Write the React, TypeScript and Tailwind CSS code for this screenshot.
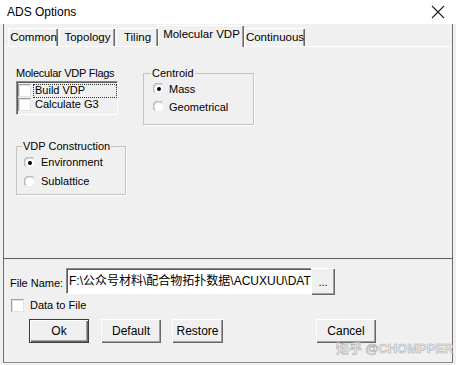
import React from "react";

const font = { fontFamily: '"Liberation Sans", "Noto Sans CJK SC", Arial, sans-serif' };

function Radio({ checked }: { checked?: boolean }) {
  return (
    <svg width="12" height="12" viewBox="0 0 12 12" className="shrink-0">
      <circle cx="6" cy="6" r="5.5" fill="#fff" />
      <path d="M1.6 9.4 A5 5 0 0 1 9.4 1.6" stroke="#9a9a9a" strokeWidth="1" fill="none" />
      <path d="M2.4 8.6 A3.9 3.9 0 0 1 8.6 2.4" stroke="#cfcfcf" strokeWidth="1" fill="none" />
      <path d="M9.4 1.6 A5 5 0 0 1 1.6 9.4" stroke="#e6e6e6" strokeWidth="1" fill="none" />
      {checked && <circle cx="6" cy="6" r="2" fill="#000" />}
    </svg>
  );
}

function Check() {
  return (
    <div className="h-[13px] w-[13px] shrink-0 border border-[#a0a0a0] border-b-[#e3e3e3] border-r-[#e3e3e3] bg-white shadow-[inset_1px_1px_0_#e0e0e0]" />
  );
}

function Btn({ label, w, def }: { label: string; w: string; def?: boolean }) {
  return (
    <div
      className={`flex h-[24px] items-center justify-center bg-[#f0f0f0] text-[12px] text-black ${w} ${
        def
          ? "border border-[#3c3c3c] shadow-[inset_1px_1px_0_#fff,inset_-1px_-1px_0_#696969,inset_-2px_-2px_0_#a0a0a0]"
          : "shadow-[inset_1px_1px_0_#fff,inset_-1px_-1px_0_#696969,inset_-2px_-2px_0_#a0a0a0]"
      }`}
    >
      {label}
    </div>
  );
}

function Tab({ label, w, active }: { label: string; w: string; active?: boolean }) {
  return (
    <div
      className={`flex items-center justify-center whitespace-nowrap bg-[#f0f0f0] text-[11.5px] ${w} ${
        active
          ? "relative z-10 -mb-[1px] h-[22px] border-l border-t border-white pb-[3px] shadow-[inset_-1px_0_0_#696969,inset_-2px_0_0_#a0a0a0]"
          : "h-[18px] border-l border-t border-white shadow-[inset_-1px_0_0_#696969,inset_-2px_0_0_#a0a0a0]"
      }`}
    >
      {label}
    </div>
  );
}

export default function App() {
  return (
    <div className="relative h-[365px] w-[456px] overflow-hidden bg-[#f0f0f0] text-black" style={font}>
      {/* title bar */}
      <div className="flex h-[24px] items-center justify-between bg-white pl-[7px] pr-[11px]">
        <span className="text-[12px]">ADS Options</span>
        <svg width="14" height="14" viewBox="0 0 14 14">
          <path d="M1 1 L13 13 M13 1 L1 13" stroke="#222" strokeWidth="1.1" />
        </svg>
      </div>

      <div className="mx-[3px] flex h-[339px] flex-col border-x border-b border-x-[#6e6e6e] border-b-[#8a8a8a]">
        {/* tabs */}
        <div className="flex h-[22px] items-end pl-[4px]">
          <Tab label="Common" w="w-[50px]" />
          <Tab label="Topology" w="w-[56px] ml-[1px]" />
          <Tab label="Tiling" w="w-[42px] ml-[1px]" />
          <Tab label="Molecular VDP" w="w-[86px]" active />
          <Tab label="Continuous" w="w-[61px]" />
        </div>

        {/* panel */}
        <div className="flex h-[213px] flex-col border-b border-t border-b-[#5a5a5a] border-t-white pl-[12px] pt-[19px] text-[11px]">
          <div className="flex items-start">
            <div className="w-[102px]">
              <div className="whitespace-nowrap leading-[14px] tracking-[-0.25px]">Molecular VDP Flags</div>
              <div className="mt-[1px] h-[34px] border border-[#8a8a8a] border-b-white border-r-white pl-[1px] pt-[2px] shadow-[inset_1px_1px_0_#5a5a5a]">
                <div className="flex h-[13px] items-center">
                  <Check />
                  <span className="ml-[2px] flex h-[14px] flex-1 items-center border border-dotted border-[#333] pl-[1px]">
                    Build VDP
                  </span>
                </div>
                <div className="flex h-[14px] items-center">
                  <Check />
                  <span className="ml-[4px]">Calculate G3</span>
                </div>
              </div>
            </div>

            <fieldset className="ml-[25px] h-[59px] w-[111px] border border-[#c4c4c4] pb-[6px] pl-[9px] shadow-[1px_1px_0_#fff]">
              <legend className="ml-[-2px] px-[1px] leading-[14px]">Centroid</legend>
              <div className="flex h-[18px] items-center gap-[4px]">
                <Radio checked />
                <span>Mass</span>
              </div>
              <div className="flex h-[18px] items-center gap-[4px]">
                <Radio />
                <span>Geometrical</span>
              </div>
            </fieldset>
          </div>

          <fieldset className="mt-[14px] h-[56px] w-[110px] border border-[#c4c4c4] pl-[7px] shadow-[1px_1px_0_#fff]">
            <legend className="ml-[-2px] whitespace-nowrap px-[1px] leading-[14px]">VDP Construction</legend>
            <div className="flex h-[19px] items-center gap-[5px]">
              <Radio checked />
              <span>Environment</span>
            </div>
            <div className="flex h-[19px] items-center gap-[5px]">
              <Radio />
              <span>Sublattice</span>
            </div>
          </fieldset>
        </div>

        {/* bottom */}
        <div className="flex flex-col pl-[6px] pt-[9px] text-[11px]">
          <div className="flex items-start">
            <span className="mt-[7px] w-[56px]">File Name:</span>
            <div className="flex h-[26px] w-[246px] items-center overflow-hidden whitespace-nowrap border border-[#8a8a8a] border-b-white border-r-white bg-white pl-[2px] text-[12px] shadow-[inset_1px_1px_0_#5a5a5a]">
              F:\公众号材料\配合物拓扑数据\ACUXUU\DAT
            </div>
            <div className="-ml-[1px] flex h-[27px] w-[24px] items-end justify-center bg-[#f0f0f0] pb-[5px] text-[11px] shadow-[inset_1px_1px_0_#fff,inset_-1px_-1px_0_#696969,inset_-2px_-2px_0_#a0a0a0]">
              ...
            </div>
          </div>

          <div className="mt-[3px] flex h-[14px] items-center pl-[1px]">
            <Check />
            <span className="ml-[6px]">Data to File</span>
          </div>

          <div className="mt-[7px] flex items-center pl-[19px]">
            <Btn label="Ok" w="w-[60px]" def />
            <Btn label="Default" w="w-[60px] ml-[12px]" />
            <Btn label="Restore" w="w-[51px] ml-[11px]" />
            <Btn label="Cancel" w="w-[60px] ml-[93px]" />
          </div>
        </div>
      </div>

      {/* watermark */}
      <div
        className="absolute left-[336px] top-[339px] whitespace-nowrap text-[13px] font-bold text-[#ececec]"
        style={{ WebkitTextStroke: "0.5px #a8a8a8" }}
      >
        知乎 @CHOMPPER
      </div>
    </div>
  );
}
